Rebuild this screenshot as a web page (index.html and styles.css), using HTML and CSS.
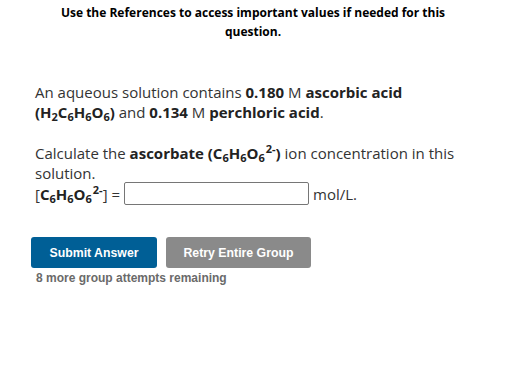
FILE: index.html
```html
<!DOCTYPE html>
<html lang="en">
<head>
    <meta charset="UTF-8">
    <meta name="viewport" content="width=device-width, initial-scale=1.0">
    <title>Question</title>
    <link rel="stylesheet" href="styles.css">
</head>
<body>
    <div class="refs">Use the References to access important values if needed for this question.</div>

    <div class="question">
        <p class="intro">An aqueous solution contains <b>0.180</b> M <b>ascorbic acid</b>
            <b>(H<sub>2</sub>C<sub>6</sub>H<sub>6</sub>O<sub>6</sub>)</b> and <b>0.134</b> M <b>perchloric acid</b>.</p>

        <p class="ask">Calculate the <b>ascorbate (C<sub>6</sub>H<sub>6</sub>O<sub>6</sub><sup>2-</sup>)</b> ion concentration in this solution.</p>
        <div class="answer-row">
            <span>[<b>C<sub>6</sub>H<sub>6</sub>O<sub>6</sub><sup>2-</sup></b>] =</span>
            <input type="text" class="answer">
            <span>mol/L.</span>
        </div>
    </div>

    <div class="actions">
        <button class="btn btn-submit">Submit Answer</button>
        <button class="btn btn-retry">Retry Entire Group</button>
    </div>
    <div class="attempts">8 more group attempts remaining</div>
</body>
</html>
```

FILE: styles.css
```css
body {
    margin: 0;
    background: #fff;
    color: #333;
    font-family: "Open Sans", sans-serif;
}
.refs {
    width: 420px;
    margin: 3px auto 0;
    text-align: center;
    font-size: 12px;
    font-weight: bold;
    line-height: 19px;
    color: #000;
}
.question {
    width: 428px;
    margin: 41px 0 0 35px;
    font-size: 15px;
    line-height: 20px;
}
.question p {
    margin: 0;
}
.question b {
    color: #222;
}
.question sub {
    font-size: 11px;
    line-height: 1;
    vertical-align: -3px;
}
.question sup {
    margin-left: 1px;
    font-size: 11px;
    line-height: 1;
    vertical-align: 6px;
}
.ask {
    margin-top: 21px !important;
}
.answer-row {
    display: flex;
    align-items: center;
    gap: 4px;
    margin-top: -1px;
}
.answer {
    width: 179px;
    height: 19px;
    margin: 0;
    padding: 1px 2px;
    border: 1px solid #767676;
    border-radius: 2px;
    font: inherit;
}
.actions {
    display: flex;
    gap: 9px;
    margin: 32px 0 0 31px;
}
.btn {
    height: 31px;
    border: none;
    border-radius: 3px;
    color: #fff;
    font-family: "Liberation Sans", Arial, sans-serif;
    font-size: 12.3px;
    font-weight: bold;
    cursor: pointer;
}
.btn-submit {
    width: 126px;
    background: #005f96;
}
.btn-retry {
    width: 145px;
    background: #8a8a8a;
}
.attempts {
    margin: 3px 0 0 36px;
    color: #6a6a6a;
    font-family: "Liberation Sans", Arial, sans-serif;
    font-size: 12px;
    font-weight: bold;
}
```
